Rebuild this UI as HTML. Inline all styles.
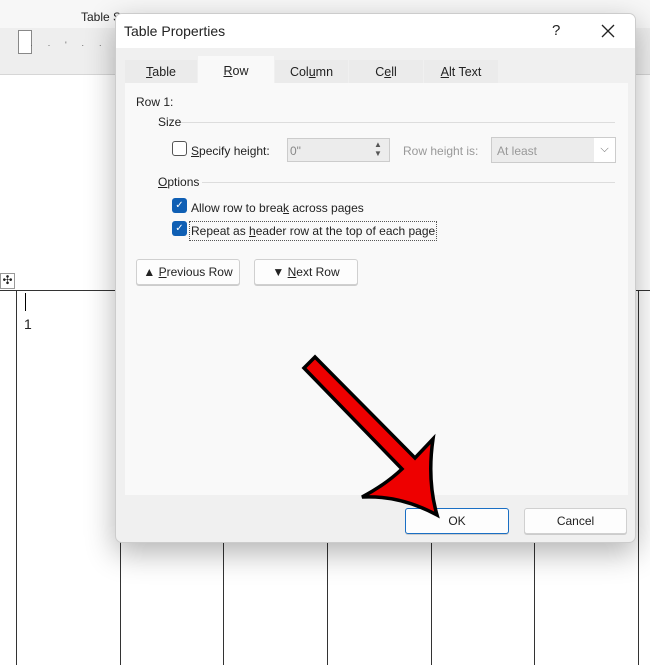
<!DOCTYPE html>
<html><head><style>
*{margin:0;padding:0;box-sizing:border-box}
body{width:650px;height:665px;overflow:hidden;background:#fff;font-family:"Liberation Sans",sans-serif;position:relative;font-size:12px;color:#222}
.a{position:absolute}
u{text-decoration:underline}
.btn{position:absolute;background:#fdfdfd;border:1px solid #d0d0d0;border-radius:3px;font-size:12px;text-align:center;line-height:24px;box-shadow:0 1px 0 #ccc}
.cb{position:absolute;width:15px;height:15px;border-radius:3px;background:#0f5fb4;color:#fff;font-size:10px;line-height:15px;text-align:center}
</style></head><body>
<div class="a" style="left:0;top:0;width:650px;height:28px;background:#f7f7f7"></div>
<div class="a" style="left:81px;top:10px;font-size:12px">Table S</div>
<div class="a" style="left:0;top:28px;width:650px;height:47px;background:#eeeeee;border-bottom:1px solid #d6d6d6"></div>
<div class="a" style="left:18px;top:30px;width:14px;height:24px;border:1px solid #888;background:#fff"></div>
<div class="a" style="left:30px;top:40px;color:#666;font-size:9px;letter-spacing:6px">· · ' · ·</div>
<div class="a" style="left:0;top:273px;width:15px;height:16px;border:1px solid #999;font-size:12px;line-height:13px;text-align:center">✣</div>
<div class="a" style="left:0;top:290px;width:650px;height:1px;background:#333"></div>
<div class="a" style="left:16px;top:290px;width:1px;height:375px;background:#333"></div>
<div class="a" style="left:120px;top:290px;width:1px;height:375px;background:#333"></div>
<div class="a" style="left:223px;top:290px;width:1px;height:375px;background:#333"></div>
<div class="a" style="left:327px;top:290px;width:1px;height:375px;background:#333"></div>
<div class="a" style="left:431px;top:290px;width:1px;height:375px;background:#333"></div>
<div class="a" style="left:534px;top:290px;width:1px;height:375px;background:#333"></div>
<div class="a" style="left:638px;top:290px;width:1px;height:375px;background:#333"></div>
<div class="a" style="left:25px;top:293px;width:1px;height:18px;background:#000"></div>
<div class="a" style="left:24px;top:316px;font-size:14px">1</div>
<div class="a" style="left:115px;top:13px;width:521px;height:530px;background:#f0f0f0;border:1px solid #ccc;border-radius:7px;box-shadow:0 10px 30px rgba(0,0,0,.3);overflow:hidden">
 <div class="a" style="left:0;top:0;width:521px;height:34px;background:#fff"></div>
 <div class="a" style="left:8px;top:9px;font-size:14px">Table Properties</div>
 <div class="a" style="left:436px;top:8px;font-size:15px">?</div>
 <svg class="a" style="left:485px;top:10px" width="14" height="14"><path d="M1 1L13 13M13 1L1 13" stroke="#222" stroke-width="1.3"/></svg>
 <div class="a" style="left:9px;top:69px;width:503px;height:412px;background:#f9f9f9"></div>
 <div class="a" style="left:9px;top:46px;width:72px;height:23px;background:#ebebeb;text-align:center;line-height:24px;font-size:12.5px"><u>T</u>able</div>
 <div class="a" style="left:82px;top:42px;width:76px;height:28px;background:#f9f9f9;text-align:center;line-height:30px;font-size:12.5px"><u>R</u>ow</div>
 <div class="a" style="left:159px;top:46px;width:73px;height:23px;background:#ebebeb;text-align:center;line-height:24px;font-size:12.5px">Col<u>u</u>mn</div>
 <div class="a" style="left:233px;top:46px;width:74px;height:23px;background:#ebebeb;text-align:center;line-height:24px;font-size:12.5px">C<u>e</u>ll</div>
 <div class="a" style="left:308px;top:46px;width:74px;height:23px;background:#ebebeb;text-align:center;line-height:24px;font-size:12.5px"><u>A</u>lt Text</div>
 <div class="a" style="left:20px;top:81px">Row 1:</div>
 <div class="a" style="left:42px;top:101px">Size</div>
 <div class="a" style="left:65px;top:108px;width:434px;height:1px;background:#ddd"></div>
 <div class="a" style="left:56px;top:127px;width:15px;height:15px;border:1px solid #555;border-radius:3px;background:#fff"></div>
 <div class="a" style="left:75px;top:130px"><u>S</u>pecify height:</div>
 <div class="a" style="left:171px;top:124px;width:103px;height:24px;border:1px solid #ccc;background:#ececec;color:#888;padding:5px 2px">0"</div>
 <div class="a" style="left:253px;top:126px;width:18px;height:19px;font-size:8px;line-height:9px;text-align:center;color:#555">▲<br>▼</div>
 <div class="a" style="left:287px;top:130px;color:#999">Row height is:</div>
 <div class="a" style="left:375px;top:123px;width:125px;height:26px;border:1px solid #ccc;background:#ececec;color:#999;padding:6px 5px">At least</div>
 <div class="a" style="left:478px;top:124px;width:21px;height:24px;background:#fff;color:#666;text-align:center;line-height:22px;font-size:11px">⌵</div>
 <div class="a" style="left:42px;top:161px"><u>O</u>ptions</div>
 <div class="a" style="left:86px;top:168px;width:413px;height:1px;background:#ddd"></div>
 <div class="cb" style="left:56px;top:184px">✓</div>
 <div class="a" style="left:75px;top:187px">Allow row to brea<u>k</u> across pages</div>
 <div class="cb" style="left:56px;top:207px">✓</div>
 <div class="a" style="left:73px;top:207px;border:1px dotted #555;padding:2px 1px">Repeat as <u>h</u>eader row at the top of each page</div>
 <div class="btn" style="left:20px;top:245px;width:104px">▲ <u>P</u>revious Row</div>
 <div class="btn" style="left:138px;top:245px;width:104px">▼ <u>N</u>ext Row</div>
 <div class="btn" style="left:289px;top:494px;width:104px;border-color:#1a6fc4">OK</div>
 <div class="btn" style="left:408px;top:494px;width:103px">Cancel</div>
</div>
<svg class="a" style="left:0;top:0" width="650" height="665"><path d="M304 368 L315 357 L415 458 L433 439 Q427 480 437 515 Q400 495 362 497 Q385 485 402 469 Z" fill="#ee0000" stroke="#000" stroke-width="3.5" stroke-linejoin="miter"/></svg>
</body></html>
